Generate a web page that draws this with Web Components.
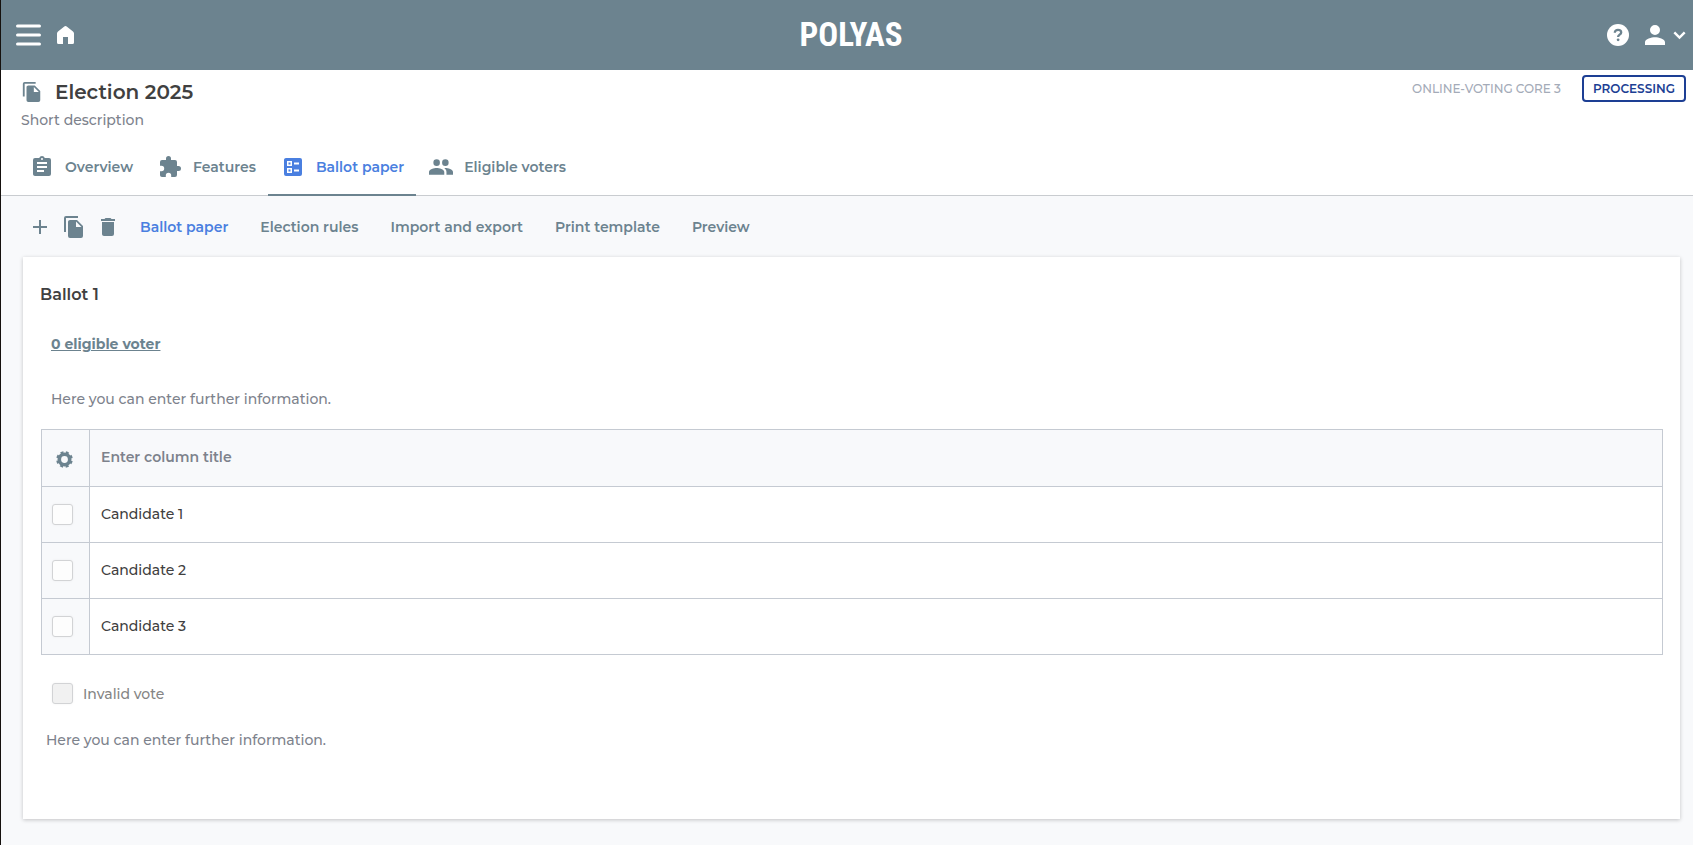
<!DOCTYPE html>
<html lang="en">
  <head>
    <meta charset="UTF-8" />
    <meta name="viewport" content="width=device-width, initial-scale=1.0" />
    <title>Election 2025</title>
    <style>
      :root {
        --slate: #6c838f;
        --blue: #4a7fe0;
        --navy: #1d3f94;
        --ink: #404040;
        --muted: #7d828c;
        --line: #c5cad2;
        --pale: #f8f9fb;
      }
      body {
        margin: 0;
        color: var(--ink);
        background: var(--pale);
        font: 500 14px/20px Montserrat, Inter, "Liberation Sans", sans-serif;
      }
    </style>
  </head>
  <body>
    <election-page>
      <app-header slot="header"></app-header>
      <election-title slot="title" name="Election 2025" product="ONLINE-VOTING CORE 3" status="PROCESSING">Short description</election-title>
      <nav-tabs slot="title">
        <nav-tab icon="clipboard">Overview</nav-tab>
        <nav-tab icon="puzzle">Features</nav-tab>
        <nav-tab icon="ballot" active>Ballot paper</nav-tab>
        <nav-tab icon="people">Eligible voters</nav-tab>
      </nav-tabs>
      <ballot-toolbar>
        <sub-link active>Ballot paper</sub-link>
        <sub-link>Election rules</sub-link>
        <sub-link>Import and export</sub-link>
        <sub-link>Print template</sub-link>
        <sub-link>Preview</sub-link>
      </ballot-toolbar>
      <ballot-card name="Ballot 1">
        <candidate-table candidates="Candidate 1,Candidate 2,Candidate 3"></candidate-table>
      </ballot-card>
    </election-page>

    <script>
      const icons = {
        menu: '<path d="M1.5 4h22M1.5 13h22M1.5 22h22" fill="none" stroke="currentColor" stroke-width="3" stroke-linecap="round"/>',
        home: '<path d="M8.5 0Q9.3 0 10 .7L16 5.5Q17 6.3 17 7.5V16.5Q17 18 15.5 18H11V11H6V18H1.5Q0 18 0 16.5V7.5Q0 6.3 1 5.5L7 .7Q7.7 0 8.5 0z"/>',
        help: '<circle cx="12" cy="12" r="11"/><path d="M8.8 9.7c0-1.900 1.400-2.900 3.200-2.900s3.200 1 3.200 2.600c0 2.300-3.100 2.200-3.100 4.500" fill="none" stroke="#6c838f" stroke-width="2.300"/><circle cx="12.100" cy="16.800" r="1.400" fill="#6c838f"/>',
        person: '<path d="M12 12a5 5 0 1 0 0-10 5 5 0 0 0 0 10zm0 2.2c-3.500 0-10 1.700-10 5V22h20v-2.800c0-3.300-6.500-5-10-5z"/>',
        chevron: '<path d="M1.300 1.300 6.500 6.500l5.200-5.200" fill="none" stroke="currentColor" stroke-width="2.400"/>',
        copy: '<path d="M16 1H4a2 2 0 0 0-2 2v14h2V3h12zm-1 4 6 6v10a2 2 0 0 1-2 2H8a2 2 0 0 1-2-2V7c0-1.100.9-2 2-2zm-1 7h5.500L14 6.500z"/>',
        clipboard: '<path d="M19 3h-4.200a3 3 0 0 0-5.600 0H5a2 2 0 0 0-2 2v14c0 1.100.9 2 2 2h14a2 2 0 0 0 2-2V5a2 2 0 0 0-2-2zm-7 0a1 1 0 1 1 0 2 1 1 0 0 1 0-2zm2 14H7v-2h7zm3-4H7v-2h10zm0-4H7V7h10z"/>',
        puzzle: '<path d="M20.5 11H19V7a2 2 0 0 0-2-2h-4V3.500a2.500 2.500 0 0 0-5 0V5H4a2 2 0 0 0-2 2v3.800h1.500a2.700 2.700 0 0 1 0 5.400H2V20c0 1.100.9 2 2 2h3.800v-1.500a2.700 2.700 0 0 1 5.400 0V22H17a2 2 0 0 0 2-2v-4h1.500a2.500 2.500 0 0 0 0-5z"/>',
        ballot: '<path fill-rule="evenodd" d="M5 3h14a2 2 0 0 1 2 2v14a2 2 0 0 1-2 2H5a2 2 0 0 1-2-2V5c0-1.100.9-2 2-2zm8 4.500h5v2h-5zm0 7h5v2h-5zM6 6h5v5H6zm1.500 1.500v2h2v-2zM6 13h5v5H6zm1.500 1.500v2h2v-2z"/>',
        people: '<path d="M16 11a3 3 0 1 0 0-6 3 3 0 0 0 0 6zm-8 0a3 3 0 1 0 0-6 3 3 0 0 0 0 6zm0 2c-2.300 0-7 1.200-7 3.500V19h14v-2.500C15 14.200 10.300 13 8 13zm8 0-1 .1c1.200.8 2 2 2 3.400V19h6v-2.500c0-2.300-4.700-3.500-7-3.500z"/>',
        plus: '<path d="M19 13h-6v6h-2v-6H5v-2h6V5h2v6h6z"/>',
        trash: '<path d="M6 19c0 1.100.9 2 2 2h8a2 2 0 0 0 2-2V7H6zM19 4h-3.500l-1-1h-5l-1 1H5v2h14z"/>',
        gear: '<circle cx="8.500" cy="8.500" r="5.200" fill="none" stroke="currentColor" stroke-width="3.600"/><path d="M8.500 1.300a7.200 7.200 0 1 1 0 14.400 7.200 7.200 0 0 1 0-14.400z" fill="none" stroke="currentColor" stroke-width="2.200" stroke-dasharray="3 2.655" stroke-dashoffset="-1.330"/>'
      }
      const boxes = {
        menu: "0 0 25 26",
        home: "0 0 17 18",
        chevron: "0 0 13 9",
        gear: "0 0 17 17",
        people: "1 1 22 22"
      }

      class AppIcon extends HTMLElement {
        constructor() {
          super()
          this.attachShadow({ mode: "open" })
        }
        connectedCallback() {
          const name = this.getAttribute("name")
          const box = boxes[name] || "0 0 24 24"
          this.shadowRoot.innerHTML = `
            <style>
              :host {
                display: block;
                flex: none;
                width: 24px;
              }
              svg {
                display: block;
                width: 100%;
                fill: currentColor;
              }
            </style>
            <svg viewBox="${box}" aria-hidden="true">${icons[name]}</svg>
          `
        }
      }
      customElements.define("app-icon", AppIcon)

      class ElectionPage extends HTMLElement {
        constructor() {
          super()
          this.attachShadow({ mode: "open" }).innerHTML = `
            <style>
              :host {
                display: flex;
                flex-direction: column;
                box-sizing: border-box;
                min-height: 100vh;
                border-left: 1px solid #15110e;
              }
              .top {
                background: #fff;
                border-bottom: 1px solid #c9ccd0;
              }
              main {
                display: flex;
                flex: 1;
                flex-direction: column;
                padding: 0 13px 26px 22px;
              }
            </style>
            <slot name="header"></slot>
            <div class="top"><slot name="title"></slot></div>
            <main><slot></slot></main>
          `
        }
      }
      customElements.define("election-page", ElectionPage)

      class AppHeader extends HTMLElement {
        constructor() {
          super()
          this.attachShadow({ mode: "open" }).innerHTML = `
            <style>
              :host {
                display: grid;
                grid-template-columns: 1fr auto 1fr;
                align-items: center;
                height: 70px;
                padding: 0 7px 0 15px;
                color: #fff;
                background: var(--slate);
              }
              div {
                display: flex;
                align-items: center;
                gap: 16px;
              }
              .account {
                justify-content: flex-end;
                gap: 13px;
              }
              button, a {
                display: flex;
                align-items: center;
                gap: 6px;
                padding: 0;
                border: 0;
                color: inherit;
                background: none;
                text-decoration: none;
              }
              .menu { width: 25px; }
              .home { width: 17px; }
              .chevron { width: 13px; }
              .logo {
                font: 700 33px/36px "Liberation Sans Narrow", "Roboto Condensed", Roboto, sans-serif;
              }
            </style>
            <div>
              <button aria-label="Menu"><app-icon class="menu" name="menu"></app-icon></button>
              <a href="#" aria-label="Home"><app-icon class="home" name="home"></app-icon></a>
            </div>
            <a class="logo" href="#">POLYAS</a>
            <div class="account">
              <button aria-label="Help"><app-icon name="help"></app-icon></button>
              <button aria-label="Account">
                <app-icon name="person"></app-icon>
                <app-icon class="chevron" name="chevron"></app-icon>
              </button>
            </div>
          `
        }
      }
      customElements.define("app-header", AppHeader)

      class ElectionTitle extends HTMLElement {
        constructor() {
          super()
          this.attachShadow({ mode: "open" })
        }
        connectedCallback() {
          this.shadowRoot.innerHTML = `
            <style>
              :host {
                display: flex;
                justify-content: space-between;
                align-items: flex-start;
                padding: 5px 7px 0 20px;
              }
              .name {
                display: flex;
                align-items: center;
                gap: 12px;
                height: 33px;
              }
              app-icon {
                width: 22px;
                color: var(--slate);
              }
              h1 {
                margin: 0;
                font-size: 20px;
                font-weight: 600;
                line-height: 24px;
              }
              p {
                margin: 2px 0 0;
                color: var(--muted);
              }
              .state {
                display: flex;
                align-items: center;
                gap: 21px;
                color: #a4abb8;
                font-size: 12px;
                line-height: 19px;
              }
              .status {
                padding: 2px 9px;
                border: 2px solid var(--navy);
                border-radius: 4px;
                color: var(--navy);
                font-weight: 600;
              }
            </style>
            <div>
              <div class="name">
                <app-icon name="copy"></app-icon>
                <h1>${this.getAttribute("name")}</h1>
              </div>
              <p><slot></slot></p>
            </div>
            <div class="state">
              <span>${this.getAttribute("product")}</span>
              <span class="status">${this.getAttribute("status")}</span>
            </div>
          `
        }
      }
      customElements.define("election-title", ElectionTitle)

      class NavTabs extends HTMLElement {
        constructor() {
          super()
          this.attachShadow({ mode: "open" }).innerHTML = `
            <style>
              nav {
                display: flex;
                margin: 10px 0 -1px 16px;
              }
            </style>
            <nav><slot></slot></nav>
          `
        }
      }
      customElements.define("nav-tabs", NavTabs)

      class NavTab extends HTMLElement {
        constructor() {
          super()
          this.attachShadow({ mode: "open" })
        }
        connectedCallback() {
          this.shadowRoot.innerHTML = `
            <style>
              :host {
                display: block;
              }
              a {
                display: flex;
                align-items: center;
                gap: 11px;
                height: 54px;
                padding: 0 12px 0 13px;
                border-bottom: 2px solid transparent;
                color: var(--slate);
                text-decoration: none;
                font-weight: 600;
              }
              :host([active]) a {
                color: var(--blue);
                border-color: var(--slate);
              }
            </style>
            <a href="#"><app-icon name="${this.getAttribute("icon")}"></app-icon><slot></slot></a>
          `
        }
      }
      customElements.define("nav-tab", NavTab)

      class BallotToolbar extends HTMLElement {
        constructor() {
          super()
          this.attachShadow({ mode: "open" }).innerHTML = `
            <style>
              :host {
                display: flex;
                align-items: center;
                gap: 20px;
                height: 61px;
                padding-left: 5px;
                color: var(--slate);
              }
              .actions {
                display: flex;
                gap: 10px;
              }
              nav {
                display: flex;
                gap: 32px;
              }
              button {
                padding: 0;
                border: 0;
                color: inherit;
                background: none;
              }
            </style>
            <div class="actions">
              <button aria-label="Add"><app-icon name="plus"></app-icon></button>
              <button aria-label="Copy"><app-icon name="copy"></app-icon></button>
              <button aria-label="Delete"><app-icon name="trash"></app-icon></button>
            </div>
            <nav><slot></slot></nav>
          `
        }
      }
      customElements.define("ballot-toolbar", BallotToolbar)

      class SubLink extends HTMLElement {
        constructor() {
          super()
          this.attachShadow({ mode: "open" }).innerHTML = `
            <style>
              :host {
                display: block;
                font-weight: 600;
              }
              a {
                color: var(--slate);
                text-decoration: none;
              }
              :host([active]) a {
                color: var(--blue);
              }
            </style>
            <a href="#"><slot></slot></a>
          `
        }
      }
      customElements.define("sub-link", SubLink)

      // checkbox look shared by the table rows and the invalid vote
      const checkStyle = `
        input {
          appearance: none;
          flex: none;
          box-sizing: border-box;
          display: block;
          width: 21px;
          height: 21px;
          margin: 0;
          border: 1px solid #d2d3d5;
          border-radius: 3px;
          background: #fdfdfd;
          box-shadow: 0 0 3px #0000000d;
        }
        input:disabled {
          background: #f1f1f1;
        }
      `

      class BallotCard extends HTMLElement {
        constructor() {
          super()
          this.attachShadow({ mode: "open" })
        }
        connectedCallback() {
          this.shadowRoot.innerHTML = `
            <style>
              ${checkStyle}
              :host {
                display: block;
                flex: 1;
                padding: 26px 17px;
                background: #fff;
                box-shadow: 0 1px 4px #00000038;
              }
              h2 {
                margin: 0 0 27px;
                font-size: 16px;
                font-weight: 600;
                line-height: 24px;
              }
              a {
                margin-left: 11px;
                color: var(--slate);
                font-weight: 700;
              }
              p {
                margin: 0;
                padding: 35px 11px 20px;
                color: var(--muted);
              }
              label {
                display: flex;
                align-items: center;
                gap: 10px;
                padding: 28px 12px 0;
                color: #858585;
              }
              .footer {
                padding: 26px 6px;
              }
            </style>
            <h2>${this.getAttribute("name")}</h2>
            <a href="#">0 eligible voter</a>
            <p>Here you can enter further information.</p>
            <slot></slot>
            <label><input type="checkbox" disabled />Invalid vote</label>
            <p class="footer">Here you can enter further information.</p>
          `
        }
      }
      customElements.define("ballot-card", BallotCard)

      class CandidateTable extends HTMLElement {
        constructor() {
          super()
          this.attachShadow({ mode: "open" })
        }
        connectedCallback() {
          const rows = this.getAttribute("candidates").split(",")
          this.shadowRoot.innerHTML = `
            <style>
              ${checkStyle}
              :host {
                display: block;
                padding-left: 1px;
              }
              table {
                width: 100%;
                border-collapse: collapse;
              }
              th, td {
                box-sizing: border-box;
                height: 56px;
                padding: 0 11px 2px;
                border: 1px solid var(--line);
                text-align: left;
              }
              th {
                height: 57px;
                color: var(--muted);
                background: var(--pale);
                font-weight: 600;
              }
              th:first-child, td:first-child {
                width: 48px;
                padding: 0 10px;
                background: var(--pale);
              }
              button {
                display: block;
                padding: 2px 5px 0 4px;
                border: 0;
                color: var(--slate);
                background: none;
              }
              app-icon {
                width: 17px;
              }
              label {
                display: block;
              }
            </style>
            <table>
              <tr>
                <th><button aria-label="Settings"><app-icon name="gear"></app-icon></button></th>
                <th>Enter column title</th>
              </tr>
              ${rows.map((row, i) => `
                <tr>
                  <td><input type="checkbox" id="c${i}" /></td>
                  <td><label for="c${i}">${row}</label></td>
                </tr>
              `).join("")}
            </table>
          `
        }
      }
      customElements.define("candidate-table", CandidateTable)
    </script>
  </body>
</html>
